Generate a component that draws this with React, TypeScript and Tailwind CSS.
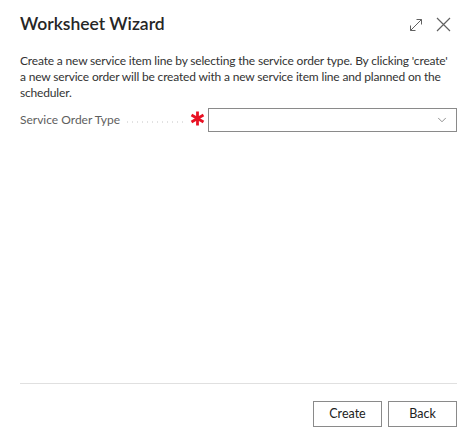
import { ChevronDown } from 'lucide-react';

export default function App() {
  return (
    <div
      className="w-[474px] h-[444px] bg-white flex flex-col text-[#212121]"
      style={{ fontFamily: 'Lato, "Open Sans", sans-serif' }}
    >
      {/* Header */}
      <div className="flex items-center justify-between pl-5 pr-[23px] pt-[11px] h-[38px]">
        <h1 className="text-[17.5px] font-semibold text-[#262626]">Worksheet Wizard</h1>
        <div className="flex items-center gap-[13px] text-[#616161]">
          <svg width="14" height="14" viewBox="0 0 14 14" fill="none" stroke="currentColor" strokeWidth="1">
            <path d="M1.5 12.5 L12.5 1.5 M7.5 1.5 H12.5 V6.5 M1.5 7.5 V12.5 H6.5" />
          </svg>
          <svg width="15" height="15" viewBox="0 0 15 15" fill="none" stroke="currentColor" strokeWidth="1.2">
            <path d="M1 1 L14 14 M14 1 L1 14" />
          </svg>
        </div>
      </div>

      {/* Body */}
      <div className="flex-1 pl-5 pr-[17px] pt-[15px]">
        <p className="text-[12px] leading-4 text-[#333] tracking-[-0.17px]">
          <span className="block whitespace-nowrap">
            Create a new service item line by selecting the service order type. By clicking 'create'
          </span>
          <span className="block whitespace-nowrap">
            a new service order will be created with a new service item line and planned on the
          </span>
          <span className="block whitespace-nowrap">scheduler.</span>
        </p>
        <div className="flex items-center mt-[7px]">
          <span className="text-[12px] text-[#5e5e5e] shrink-0">Service Order Type</span>
          <svg className="flex-1 mx-[6px] mt-1" height="2">
            <line x1="1" y1="1" x2="100%" y2="1" stroke="#c4c4c4" strokeWidth="1" strokeDasharray="1 4" />
          </svg>
          <svg className="mr-[3px] -mt-[4px]" width="15" height="15" viewBox="0 0 14 14" stroke="#e81123" strokeWidth="2.6">
            <path d="M7 0.5 V13.5 M1.4 3.75 L12.6 10.25 M1.4 10.25 L12.6 3.75" />
          </svg>
          <div className="w-[249px] h-[24px] border border-[#8a8a8a] flex items-center justify-end pr-[7px] text-[#616161]">
            <ChevronDown size={14} strokeWidth={1.2} />
          </div>
        </div>
      </div>

      {/* Footer */}
      <div className="ml-5 mr-[17px] border-t border-[#e0e0e0] pt-[17px] pb-[17px] flex justify-end gap-[6px]">
        <button className="w-[69px] h-[26px] border border-[#8a8a8a] text-[12.5px] text-[#212121] bg-white">
          Create
        </button>
        <button className="w-[69px] h-[26px] border border-[#8a8a8a] text-[12.5px] text-[#212121] bg-white">
          Back
        </button>
      </div>
    </div>
  );
}
